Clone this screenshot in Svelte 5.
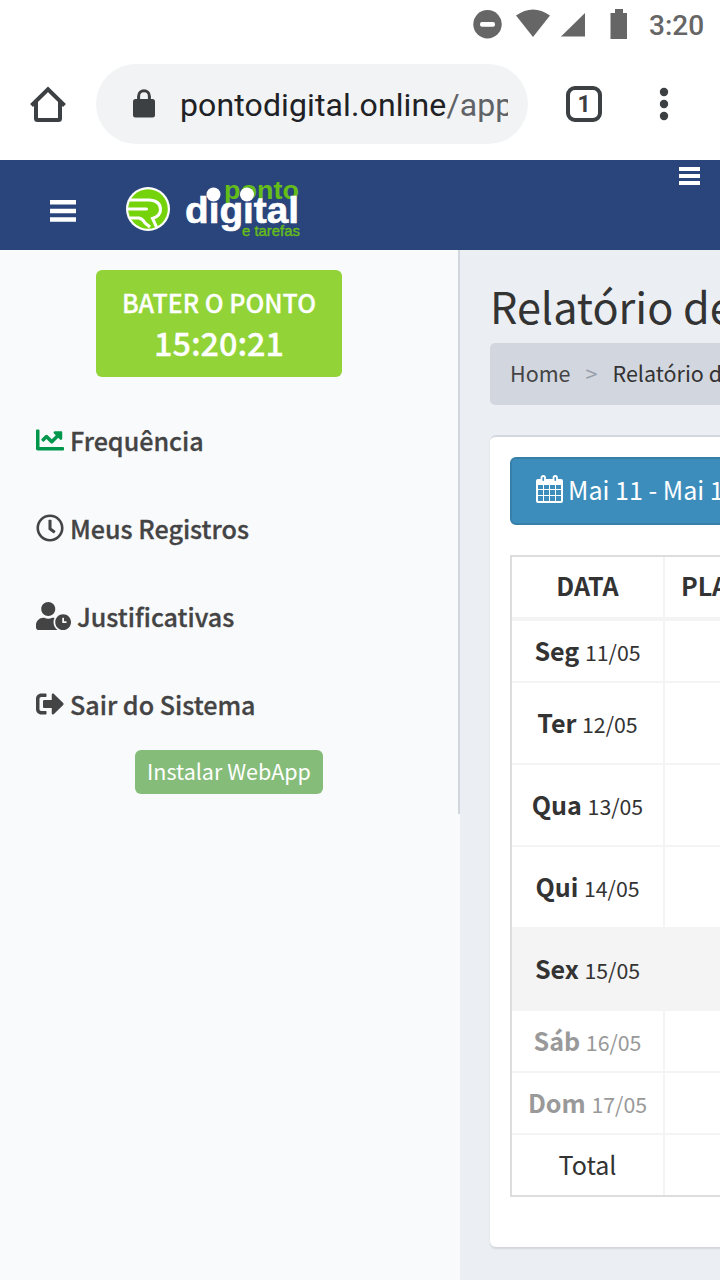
<!--
  App.svelte: time clock web app in a mobile browser.
  The sidebar is open and pushes the report page off to the right.
-->

<script lang="ts">
	type MenuItem = { label: string; width: number; viewBox: string; path: string; green?: boolean };
	type Day = { name: string; date: string; size: 'short' | 'tall'; today?: boolean; off?: boolean };

	const clock = '15:20:21';

	const menu: MenuItem[] = [
		{
			label: 'Frequência',
			width: 28,
			viewBox: '0 0 512 512',
			green: true,
			path: 'M496 384H64V80c0-8.84-7.16-16-16-16H16C7.16 64 0 71.16 0 80v336c0 17.67 14.33 32 32 32h464c8.84 0 16-7.16 16-16v-32c0-8.84-7.16-16-16-16zM464 96H345.94c-21.38 0-32.09 25.85-16.97 40.97l32.4 32.4L288 242.75l-73.37-73.37c-12.5-12.5-32.76-12.5-45.25 0l-68.69 68.69c-6.25 6.25-6.25 16.38 0 22.63l22.62 22.62c6.25 6.25 16.38 6.25 22.63 0L192 237.25l73.37 73.37c12.5 12.5 32.76 12.5 45.25 0l96-96 32.4 32.4c15.12 15.12 40.97 4.41 40.97-16.97V112c.01-8.84-7.15-16-15.99-16z',
		},
		{
			label: 'Meus Registros',
			width: 28,
			viewBox: '0 0 512 512',
			path: 'M256 8C119 8 8 119 8 256s111 248 248 248 248-111 248-248S393 8 256 8zm0 448c-110.5 0-200-89.5-200-200S145.5 56 256 56s200 89.5 200 200-89.5 200-200 200zm61.8-104.4l-84.9-61.7c-3.1-2.3-4.9-5.9-4.9-9.7V116c0-6.6 5.4-12 12-12h32c6.6 0 12 5.4 12 12v141.7l66.8 48.6c5.4 3.9 6.5 11.4 2.6 16.8L334.6 349c-3.9 5.3-11.4 6.5-16.8 2.6z',
		},
		{
			label: 'Justificativas',
			width: 35,
			viewBox: '0 0 640 512',
			path: 'M496 224c-79.6 0-144 64.4-144 144s64.4 144 144 144 144-64.4 144-144-64.4-144-144-144zm64 150.3c0 5.3-4.4 9.7-9.7 9.7h-60.6c-5.3 0-9.7-4.4-9.7-9.7v-76.6c0-5.3 4.4-9.7 9.7-9.7h12.6c5.3 0 9.7 4.4 9.7 9.7V352h38.3c5.3 0 9.7 4.4 9.7 9.7v12.6zM320 368c0-27.8 6.7-54.1 18.2-77.5-8-1.5-16.2-2.5-24.6-2.5h-16.7c-22.2 10.2-46.9 16-72.9 16s-50.6-5.8-72.9-16h-16.7C60.2 288 0 348.2 0 422.4V464c0 26.5 21.5 48 48 48h347.1c-45.3-31.9-75.1-84.5-75.1-144zm-96-112c70.7 0 128-57.3 128-128S294.7 0 224 0 96 57.3 96 128s57.3 128 128 128z',
		},
		{
			label: 'Sair do Sistema',
			width: 28,
			viewBox: '0 0 512 512',
			path: 'M497 273L329 441c-15 15-41 4.5-41-17v-96H152c-13.3 0-24-10.7-24-24v-96c0-13.3 10.7-24 24-24h136V88c0-21.4 25.9-32 41-17l168 168c9.3 9.4 9.3 24.6 0 34zM192 436v-40c0-6.6-5.4-12-12-12H96c-17.7 0-32-14.3-32-32V160c0-17.7 14.3-32 32-32h84c6.6 0 12-5.4 12-12V76c0-6.6-5.4-12-12-12H96c-53 0-96 43-96 96v192c0 53 43 96 96 96h84c6.6 0 12-5.4 12-12z',
		},
	];

	const days: Day[] = [
		{ name: 'Seg', date: '11/05', size: 'short' },
		{ name: 'Ter', date: '12/05', size: 'tall' },
		{ name: 'Qua', date: '13/05', size: 'tall' },
		{ name: 'Qui', date: '14/05', size: 'tall' },
		{ name: 'Sex', date: '15/05', size: 'tall', today: true },
		{ name: 'Sáb', date: '16/05', size: 'short', off: true },
		{ name: 'Dom', date: '17/05', size: 'short', off: true },
	];
</script>

<div class="screen">
	<!-- Phone status bar -->
	<div class="status-bar">
		<svg class="status-icons" width="160" height="48" viewBox="0 0 160 48" aria-hidden="true">
			<circle cx="17.5" cy="24.3" r="14.2" />
			<rect class="knockout" x="10" y="22" width="15" height="4.8" rx="2" />
			<path d="M46 15.5Q63 3.5 80 15.5L63 37Z" />
			<path d="M115 13V36.5H91Z" />
			<path d="M145 9h8v4h4v26h-16.5V13h4.5z" />
		</svg>
		<span class="status-time">3:20</span>
	</div>

	<!-- Browser toolbar -->
	<div class="toolbar">
		<svg class="home" width="40" height="40" viewBox="0 0 40 40" aria-hidden="true">
			<path d="M3.5 21.5L20 5.3 36.5 21.5M8 18v16.5q0 1.500 1.500 1.500h21q1.500 0 1.500-1.500V18" />
		</svg>
		<div class="address">
			<svg width="24" height="30" viewBox="0 0 24 30" aria-hidden="true">
				<rect x="1" y="10" width="22" height="18.5" rx="2.5" />
				<path class="shackle" d="M6.6 11V7.200a5.400 5.400 0 0 1 10.800 0V11" />
			</svg>
			<span class="url">pontodigital.online<span class="url-path">/app</span></span>
		</div>
		<div class="tabs">1</div>
		<svg class="dots" width="10" height="34" viewBox="0 0 10 34" aria-hidden="true">
			<circle cx="5" cy="5" r="4.2" />
			<circle cx="5" cy="17" r="4.2" />
			<circle cx="5" cy="29" r="4.2" />
		</svg>
	</div>

	<!-- App header -->
	<header class="app-header">
		<svg class="bars" width="26" height="22" viewBox="0 0 26 22" aria-hidden="true">
			<path d="M0 0h26v4.500H0zM0 8.700h26v4.500H0zM0 17.300h26v4.500H0z" />
		</svg>
		<svg class="logo" width="184" height="70" viewBox="0 0 184 70">
			<circle cx="28" cy="37" r="22" fill="#fff" />
			<circle cx="28" cy="37" r="19.8" fill="#75d30c" />
			<g fill="none" stroke="#fff">
				<path d="M10 28H29.500q11 1 11 9.500q0 6.500-8 9l4 8.500" stroke-width="3" />
				<path d="M9 37H26.500" stroke-width="3" stroke-linecap="round" />
				<path d="M10 46H19q4 1 6 5l5 4" stroke-width="3" />
			</g>
			<text class="logo-green" x="104" y="26.5" font-size="25" textLength="75" lengthAdjust="spacingAndGlyphs">ponto</text>
			<text class="logo-white" x="65" y="50.5" font-size="36" textLength="114" lengthAdjust="spacingAndGlyphs">digıtal</text>
			<circle cx="93.5" cy="22.5" r="7" fill="#fff" />
			<circle cx="127" cy="22.5" r="7" fill="#fff" />
			<text class="logo-green logo-sub" x="122" y="64" font-size="15" textLength="58" lengthAdjust="spacingAndGlyphs">e tarefas</text>
		</svg>
		<svg class="bars bars-right" width="21" height="18" viewBox="0 0 21 18" aria-hidden="true">
			<path d="M0 0h21v4H0zM0 7h21v4H0zM0 14h21v4H0z" />
		</svg>
	</header>

	<div class="body">
		<aside class="sidebar">
			<div class="sidebar-inner">
				<button type="button" class="punch">
					<span class="punch-label">BATER O PONTO</span>
					<span class="punch-time">{clock}</span>
				</button>

				<nav class="menu">
					{#each menu as item}
						<a href="#menu" class="menu-item">
							<svg class:green={item.green} width={item.width} height="28" viewBox={item.viewBox} aria-hidden="true">
								<path d={item.path} />
							</svg>
							<span>{item.label}</span>
						</a>
					{/each}
				</nav>

				<button type="button" class="install">Instalar WebApp</button>
			</div>
		</aside>

		<main class="content">
			<h1>Relatório de Frequência</h1>
			<div class="breadcrumb">
				<span class="crumb-home">Home</span>
				<span class="crumb-sep">&gt;</span>
				<span class="crumb-current">Relatório de Frequência</span>
			</div>

			<section class="box">
				<button type="button" class="period">
					<svg width="27" height="30" viewBox="0 0 27 30" aria-hidden="true">
						<path fill-rule="evenodd" d="M2 5h23q2 0 2 2v20q0 2-2 2H2q-2 0-2-2V7q0-2 2-2zM2 11v4h5v-4zM8 11v4h5v-4zM14 11v4h5v-4zM20 11v4h5v-4zM2 16v5h5v-5zM8 16v5h5v-5zM14 16v5h5v-5zM20 16v5h5v-5zM2 22v5h5v-5zM8 22v5h5v-5zM14 22v5h5v-5zM20 22v5h5v-5z" />
						<rect class="ring" x="5.5" y="2" width="3.5" height="6" rx="1.7" />
						<rect class="ring" x="17.5" y="2" width="3.5" height="6" rx="1.7" />
					</svg>
					<span>Mai 11 - Mai 17</span>
				</button>

				<table>
					<thead>
						<tr>
							<th>DATA</th>
							<th class="plan">PLANEJADO</th>
						</tr>
					</thead>
					<tbody>
						{#each days as day}
							<tr class={day.size} class:today={day.today} class:off={day.off}>
								<td><b>{day.name}</b> <small>{day.date}</small></td>
								<td></td>
							</tr>
						{/each}
						<tr class="total">
							<td>Total</td>
							<td></td>
						</tr>
					</tbody>
				</table>
			</section>
		</main>
	</div>
</div>

<style>
	:global(body) {
		background: #fff;
	}

	.screen {
		width: 720px;
		height: 1280px;
		overflow: hidden;
		display: flex;
		flex-direction: column;
		font-family: 'Noto Sans CJK SC', 'Noto Sans CJK JP', 'Open Sans', sans-serif;
		font-size: 25.1px;
		color: #333;
	}

	svg {
		display: block;
		flex-shrink: 0;
	}

	button {
		border: 0;
		padding: 0;
		font-family: inherit;
		color: #fff;
	}

	/* Status bar */

	.status-bar {
		height: 48px;
		display: flex;
		align-items: center;
		justify-content: flex-end;
		gap: 19px;
		padding-right: 16px;
		box-sizing: border-box;
		flex-shrink: 0;
	}

	.status-icons {
		fill: #666;
	}

	.knockout {
		fill: #fff;
	}

	.status-time {
		font: 500 28px/48px Roboto, sans-serif;
		color: #666;
		width: 55px;
		padding-top: 3px;
	}

	/* Browser toolbar */

	.toolbar {
		height: 112px;
		display: flex;
		align-items: center;
		padding-left: 28px;
		flex-shrink: 0;
	}

	.home path {
		fill: none;
		stroke: #3c4043;
		stroke-width: 4;
	}

	.address {
		width: 432px;
		height: 80px;
		margin-left: 28px;
		padding: 0 20px 0 36px;
		box-sizing: border-box;
		border-radius: 40px;
		background: #f1f3f4;
		display: flex;
		align-items: center;
		gap: 24px;
		fill: #3c4043;
	}

	.shackle {
		fill: none;
		stroke: #3c4043;
		stroke-width: 3;
	}

	.url {
		flex: 1;
		min-width: 0;
		padding-top: 2px;
		overflow: hidden;
		white-space: nowrap;
		font: 400 32px/44px Roboto, sans-serif;
		letter-spacing: 0.12px;
		color: #202124;
	}

	.url-path {
		color: #5f6368;
	}

	.tabs {
		width: 36px;
		height: 36px;
		margin-left: 38px;
		box-sizing: border-box;
		border: 4px solid #3c4043;
		border-radius: 9px;
		font: 700 23px/30px Roboto, sans-serif;
		text-align: center;
		color: #3c4043;
	}

	.dots {
		margin-left: 57px;
		fill: #3c4043;
	}

	/* App header */

	.app-header {
		height: 90px;
		display: flex;
		padding: 0 20px 0 50px;
		box-sizing: border-box;
		background: #2a457b;
		flex-shrink: 0;
		fill: #fff;
	}

	.bars {
		margin-top: 40px;
	}

	.bars-right {
		margin: 7px 0 0 auto;
	}

	.logo {
		margin: 12px 0 0 44px;
	}

	.logo text {
		font-family: 'Liberation Sans', Arial, sans-serif;
		font-weight: 700;
	}

	.logo .logo-white {
		fill: #fff;
		stroke: #fff;
		stroke-width: 0.6;
	}

	.logo .logo-green {
		fill: #65bd19;
	}

	.logo .logo-sub {
		font-weight: 400;
		stroke: #65bd19;
		stroke-width: 0.4;
	}

	/* Sidebar */

	.body {
		flex: 1;
		min-height: 0;
		display: flex;
	}

	.sidebar {
		width: 460px;
		flex-shrink: 0;
		background: #f9fafc;
	}

	.sidebar-inner {
		height: 564px;
		box-sizing: border-box;
		padding-top: 20px;
		border-right: 2px solid #d2d6de;
		display: flex;
		flex-direction: column;
		align-items: center;
	}

	.punch {
		width: 246px;
		height: 107px;
		margin-right: 20px;
		padding-bottom: 3px;
		box-sizing: border-box;
		border-radius: 6px;
		background: #92d437;
		display: flex;
		flex-direction: column;
		align-items: center;
		justify-content: center;
		font-weight: 500;
		-webkit-text-stroke: 0.3px #fff;
	}

	.punch-label {
		font-size: 25px;
		line-height: 40px;
	}

	.punch-time {
		font-size: 32.4px;
		line-height: 40px;
	}

	.menu {
		align-self: stretch;
		margin-top: 19px;
	}

	.menu-item {
		height: 88px;
		padding-left: 36px;
		display: flex;
		align-items: center;
		gap: 6px;
		font-weight: 500;
		line-height: 40px;
		color: #444;
		fill: #444;
		text-decoration: none;
		-webkit-text-stroke: 0.3px #444;
	}

	.green {
		fill: #00964b;
	}

	.install {
		width: 188px;
		height: 44px;
		margin-top: 2px;
		padding-bottom: 2px;
		border-radius: 6px;
		background: #86bc7a;
		font-size: 21.5px;
		line-height: 42px;
		flex-shrink: 0;
	}

	/* Report page */

	.content {
		width: 700px;
		flex-shrink: 0;
		padding: 28px 30px 30px;
		box-sizing: border-box;
		background: #ebeff4;
		white-space: nowrap;
	}

	h1 {
		margin: 0;
		font-size: 43.2px;
		font-weight: 400;
		line-height: 54px;
	}

	.breadcrumb {
		height: 62px;
		margin-top: 11px;
		padding: 0 0 2px 20px;
		box-sizing: border-box;
		border-radius: 5px;
		background: #d2d6df;
		display: flex;
		align-items: center;
		font-size: 21.5px;
		line-height: 40px;
	}

	.crumb-home {
		color: #444;
	}

	.crumb-sep {
		width: 42px;
		text-align: center;
		color: #999fac;
	}

	.box {
		height: 812px;
		margin-top: 30px;
		padding: 20px;
		box-sizing: border-box;
		border-top: 2px solid #d2d6de;
		border-radius: 6px;
		background: #fff;
		box-shadow: 0 2px 2px rgba(0, 0, 0, 0.1);
	}

	.period {
		height: 68px;
		width: 300px;
		padding: 0 0 4px 24px;
		box-sizing: border-box;
		border: 2px solid #367fa9;
		border-radius: 6px;
		background: #3c8dbc;
		display: flex;
		align-items: center;
		gap: 5px;
		font-size: 25.1px;
		fill: #fff;
	}

	.ring {
		fill: #3c8dbc;
		stroke: #fff;
		stroke-width: 1.8;
	}

	table {
		width: 600px;
		margin-top: 30px;
		border: 2px solid #ddd;
		border-spacing: 0;
		table-layout: fixed;
	}

	th,
	td {
		height: 62px;
		padding: 0;
		box-sizing: border-box;
		border-right: 2px solid #f4f4f4;
		border-bottom: 2px solid #f4f4f4;
		text-align: center;
		line-height: 40px;
	}

	th {
		width: 153px;
		height: 64px;
		padding-bottom: 4px;
		border-bottom-width: 4px;
		font-weight: 700;
	}

	th.plan {
		width: auto;
		padding-left: 16px;
		text-align: left;
	}

	.tall td {
		height: 82px;
	}

	.today {
		background: #f4f4f4;
	}

	.off {
		color: #999;
	}

	.total td {
		height: 60px;
		padding-bottom: 2px;
		border-bottom: 0;
	}

	small {
		font-size: 21.3px;
	}
</style>
